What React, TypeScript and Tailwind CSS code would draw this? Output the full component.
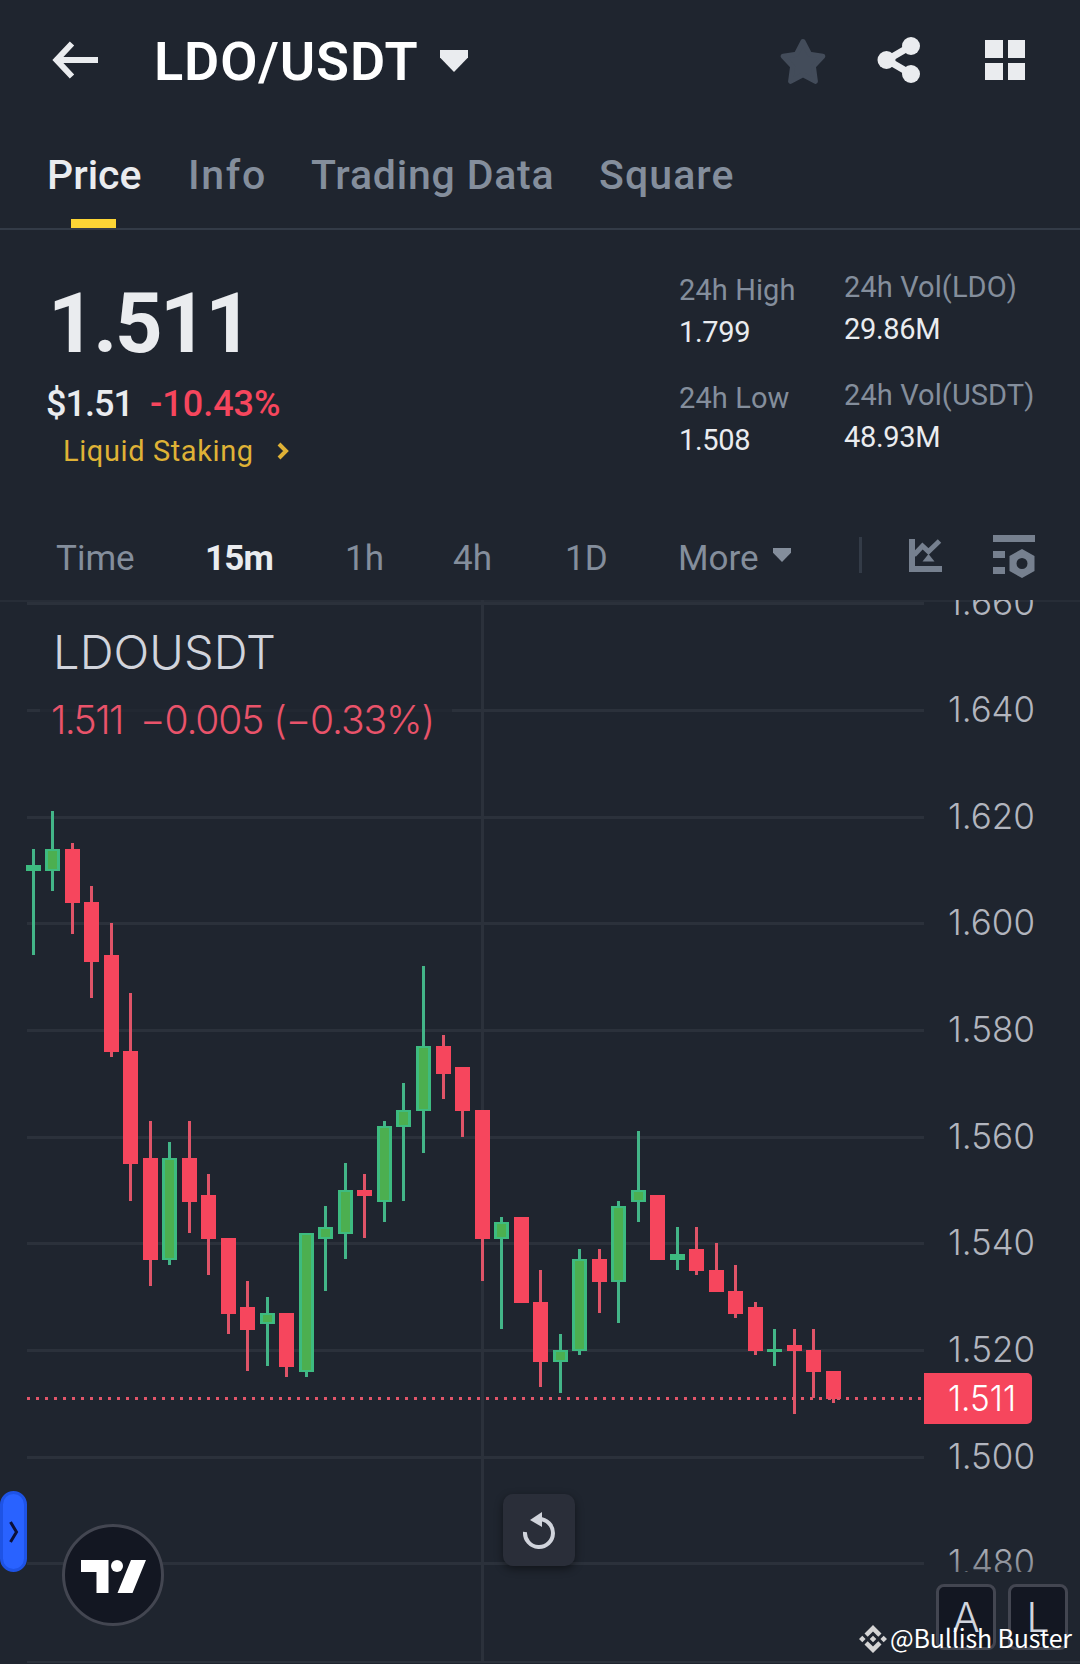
import type { ReactNode } from "react";

type Candle = [open: number, high: number, low: number, close: number];

// Prices in thousandths of a USDT
const candles: Candle[] = [
  [1610, 1614, 1594, 1611],
  [1610, 1621, 1606, 1614],
  [1614, 1615, 1598, 1604],
  [1604, 1607, 1586, 1593],
  [1594, 1600, 1575, 1576],
  [1576, 1587, 1548, 1555],
  [1556, 1563, 1532, 1537],
  [1537, 1559, 1536, 1556],
  [1556, 1563, 1542, 1548],
  [1549, 1553, 1534, 1541],
  [1541, 1541, 1523, 1527],
  [1528, 1533, 1516, 1524],
  [1525, 1530, 1517, 1527],
  [1527, 1527, 1515, 1517],
  [1516, 1542, 1515, 1542],
  [1541, 1547, 1531, 1543],
  [1542, 1555, 1537, 1550],
  [1550, 1553, 1541, 1549],
  [1548, 1563, 1544, 1562],
  [1562, 1570, 1548, 1565],
  [1565, 1592, 1557, 1577],
  [1577, 1579, 1567, 1572],
  [1573, 1573, 1560, 1565],
  [1565, 1565, 1533, 1541],
  [1541, 1545, 1524, 1544],
  [1545, 1545, 1529, 1529],
  [1529, 1535, 1513, 1518],
  [1518, 1523, 1512, 1520],
  [1520, 1539, 1519, 1537],
  [1537, 1539, 1527, 1533],
  [1533, 1548, 1525, 1547],
  [1548, 1561, 1544, 1550],
  [1549, 1549, 1537, 1537],
  [1537, 1543, 1535, 1538],
  [1539, 1543, 1534, 1535],
  [1535, 1540, 1531, 1531],
  [1531, 1536, 1526, 1527],
  [1528, 1529, 1519, 1520],
  [1520, 1524, 1517, 1520],
  [1521, 1524, 1508, 1520],
  [1520, 1524, 1511, 1516],
  [1516, 1516, 1510, 1511],
];

const gridPrices = [1660, 1640, 1620, 1600, 1580, 1560, 1540, 1520, 1500, 1480];

const priceToY = (price: number) => Math.floor(537.01 + ((1560 - price) * 16) / 3);
const indexToX = (index: number) => 33 + Math.floor(0.1 + 19.52 * index);

const tabs = [
  { label: "Price", className: "w-[141px] text-[#eaecef]", active: true },
  { label: "Info", className: "w-[123px] tracking-[1.7px] text-[#848e9c]" },
  { label: "Trading Data", className: "w-[288px] tracking-[0.8px] text-[#848e9c]" },
  { label: "Square", className: "tracking-[1.1px] text-[#848e9c]" },
];

const stats = [
  [
    { label: "24h High", value: "1.799" },
    { label: "24h Low", value: "1.508" },
  ],
  [
    { label: "24h Vol(LDO)", value: "29.86M" },
    { label: "24h Vol(USDT)", value: "48.93M" },
  ],
];

const intervals = [
  { label: "Time", className: "w-[149px] text-[#848e9c]" },
  { label: "15m", className: "w-[140px] font-bold tracking-[-0.8px] text-[#eaecef]" },
  { label: "1h", className: "w-[108px] text-[#848e9c]" },
  { label: "4h", className: "w-[112px] text-[#848e9c]" },
  { label: "1D", className: "w-[113px] text-[#848e9c]" },
];

function CaretDown({ className }: { className: string }) {
  return (
    <svg viewBox="0 0 28 22" preserveAspectRatio="none" className={className} fill="currentColor" aria-hidden="true">
      <path d="M0 0H28V7.5L14 22L0 7.5Z" />
    </svg>
  );
}

function Header() {
  return (
    <header className="flex h-[124px] items-center pl-[52px]">
      <svg width="47" height="38" viewBox="0 0 47 38" fill="none" stroke="#eaecef" strokeWidth="6" className="-mt-1 shrink-0">
        <path d="M46 19H5M20 2.5L4.5 19L20 35.5" />
      </svg>
      <h1 className="ml-[55px] w-[286px] text-[54px] leading-[54px] font-semibold tracking-[0.9px] text-white">LDO/USDT</h1>
      <CaretDown className="-mt-[2px] h-[22px] w-7 shrink-0 text-[#eaecef]" />
      <svg width="46" height="48" viewBox="0 0 46 48" fill="#434c5a" stroke="#434c5a" strokeWidth="5" strokeLinejoin="round" className="ml-[312px] shrink-0">
        <path d="M23 3.5L29.6 16.2L42.8 18.2L33.4 28.4L35.4 43.4L23 36.8L10.6 43.4L12.6 28.4L3.2 18.2L16.4 16.2Z" />
      </svg>
      <svg width="44" height="48" viewBox="0 0 44 48" fill="#eaecef" className="-mt-1 ml-[51px] shrink-0">
        <path d="M10 24L34 10M10 24L34 38" stroke="#eaecef" strokeWidth="7" />
        <circle cx="9.500" cy="24" r="9" />
        <circle cx="34" cy="10" r="9" />
        <circle cx="34" cy="38" r="9" />
      </svg>
      <div className="-mt-1 ml-[64px] grid grid-cols-2 gap-[5px]">
        {[0, 1, 2, 3].map((cell) => (
          <span key={cell} className="h-[17.5px] w-[17.5px] bg-[#eaecef]" />
        ))}
      </div>
    </header>
  );
}

function Tabs() {
  return (
    <nav className="flex h-[106px] items-center border-b-2 border-[#333b47] pl-[47px] text-[41px] font-medium">
      {tabs.map((tab) => (
        <div key={tab.label} className={`relative flex h-full items-center whitespace-nowrap ${tab.className}`}>
          {tab.label}
          {tab.active && <span className="absolute bottom-0 left-6 h-[9px] w-[45px] bg-[#fcd535]" />}
        </div>
      ))}
    </nav>
  );
}

function Ticker() {
  return (
    <section className="flex h-[288px]">
      <div className="w-[679px] pt-[52px]">
        <p className="pl-[48px] text-[83px] leading-[84px] font-bold tracking-[-2.4px] text-[#eaecef]">1.511</p>
        <div className="mt-4 flex pl-[46px] text-[36px] leading-[44px] font-medium">
          <span className="w-[104px] tracking-[-1px] text-[#eaecef]">$1.51</span>
          <span className="text-[#f6465d]">-10.43%</span>
        </div>
        <div className="mt-[5px] flex items-center pl-[63px] text-[29px] leading-[40px] text-[#dfb236]">
          <span className="w-[214px] tracking-[0.6px]">Liquid Staking</span>
          <svg width="12" height="18" viewBox="0 0 12 18" fill="none" stroke="currentColor" strokeWidth="4">
            <path d="M2 2L9 9L2 16" />
          </svg>
        </div>
      </div>
      {stats.map((column, index) => (
        <dl key={index} className={index === 0 ? "w-[165px] pt-[43px]" : "pt-10"}>
          {column.map((stat) => (
            <div key={stat.label} className="mb-8 flex flex-col gap-2 text-[29px] leading-[34px] whitespace-nowrap">
              <dt className="tracking-[0.1px] text-[#848e9c]">{stat.label}</dt>
              <dd className="tracking-[-0.3px] text-[#eaecef]">{stat.value}</dd>
            </div>
          ))}
        </dl>
      ))}
    </section>
  );
}

function IntervalBar() {
  return (
    <nav className="flex h-[82px] items-center pl-[56px] text-[35px] text-[#848e9c]">
      {intervals.map((item) => (
        <span key={item.label} className={item.className}>
          {item.label}
        </span>
      ))}
      <span className="w-[95px]">More</span>
      <CaretDown className="-mt-2 h-[14px] w-[18px]" />
      <span className="-mt-2 ml-[68px] h-[36px] w-[3px] bg-[#333b47]" />
      <svg width="33" height="33" viewBox="0 0 33 33" fill="#76808f" className="-mt-2 ml-[47px]">
        <path d="M0 0H6V27H33V33H0Z" />
        <path d="M5 16L13.500 7L19.500 12.500L30.500 2" fill="none" stroke="#76808f" strokeWidth="5" />
        <path d="M13.500 22.500L19.500 15L25.500 22.500Z" />
      </svg>
      <svg width="42" height="43" viewBox="0 0 42 43" fill="#76808f" className="-mt-[6px] ml-[51px]">
        <path d="M0 0H42V7H0ZM0 16H12V23H0ZM0 32H12V39H0Z" />
        <path fillRule="evenodd" d="M29 14L41.500 21V36L29 43L16.500 36V21ZM29 23A5.500 5.500 0 1 0 29 34A5.500 5.500 0 1 0 29 23Z" />
      </svg>
    </nav>
  );
}

function CandleShape({ candle, index }: { candle: Candle; index: number }) {
  const [open, high, low, close] = candle;
  const up = close >= open && !(close === open && high === open);
  const x = indexToX(index);
  const top = priceToY(Math.max(open, close));
  const bottom = priceToY(Math.min(open, close)) + 1;
  const bodyTop = open === close ? top - 1 : top;
  const height = Math.max(3, bottom - bodyTop);

  return (
    <g fill={up ? "#3dbb80" : "#f6465d"}>
      <rect x={x - 1} y={priceToY(high)} width={3} height={priceToY(low) - priceToY(high)} fill={up ? "#43b588" : "#df5468"} />
      <rect x={x - 7} y={bodyTop} width={15} height={height} />
      {up && height > 8 && <rect x={x - 4} y={bodyTop + 2} width={9} height={height - 4} fill="#4caf50" />}
    </g>
  );
}

function PriceChart() {
  const lastY = priceToY(1511);

  return (
    <svg width="1080" height="1064" viewBox="0 0 1080 1064" className="block font-['Inter',sans-serif] font-light">
      <defs>
        <linearGradient id="axisFade" x1="0" y1="0" x2="0" y2="1">
          <stop offset="0" stopColor="#1f252f" stopOpacity="0" />
          <stop offset="1" stopColor="#1f252f" stopOpacity="0.35" />
        </linearGradient>
      </defs>
      <rect x="0" y="0" width="1080" height="2" fill="#272d37" />
      <g fill="#2b313b" shapeRendering="crispEdges">
        {gridPrices.map((price) => (
          <rect key={price} x={27} y={priceToY(price) - 1} width={897} height={3} />
        ))}
        <rect x="481" y="0" width="3" height="1061" />
        <rect x="27" y="1061" width="1053" height="2" />
      </g>
      <rect x="40" y="90" width="412" height="50" fill="#1f252f" fillOpacity="0.7" />
      <g shapeRendering="crispEdges">
        {candles.map((candle, index) => (
          <CandleShape key={index} candle={candle} index={index} />
        ))}
      </g>
      <path d={`M27 ${lastY + 0.5}H924`} stroke="#e2566a" strokeWidth="3" strokeDasharray="3 6" />
      <g fill="#b2b5be" fontSize="36">
        {gridPrices.map((price) => (
          <text key={price} x={948} y={priceToY(price) + 12} textLength={87} lengthAdjust="spacingAndGlyphs">
            {(price / 1000).toFixed(3)}
          </text>
        ))}
      </g>
      <rect x="940" y="945" width="110" height="27" fill="url(#axisFade)" />
      <rect x="940" y="972" width="110" height="12" fill="#1f252f" />
      <path d={`M924 ${lastY - 25}H1027a5 5 0 0 1 5 5V${lastY + 21}a5 5 0 0 1 -5 5H924Z`} fill="#f6465d" />
      <text x={948} y={lastY + 13} fontSize="36" fill="#fff" textLength={68} lengthAdjust="spacingAndGlyphs">
        1.511
      </text>
    </svg>
  );
}

function ScaleButton({ children }: { children: ReactNode }) {
  return (
    <button className="flex h-[66px] w-[60px] items-center justify-center rounded-lg border-3 border-[#434651] bg-[#131722] text-[41px] leading-none">
      {children}
    </button>
  );
}

function Chart() {
  return (
    <main className="relative h-[1064px] overflow-hidden font-['Inter',sans-serif] font-light">
      <PriceChart />

      <div className="absolute top-[24px] left-[53px] whitespace-nowrap">
        <h2 className="text-[47px] leading-[56px] tracking-[0.1px] text-[#d1d4dc]">LDOUSDT</h2>
        <p className="mt-[15px] -ml-[2px] flex text-[39px] leading-[50px] text-[#e9536a]">
          <span className="w-[89px] tracking-[-1.6px]">1.511</span>
          <span className="tracking-[-1.1px]">−0.005 (−0.33%)</span>
        </p>
      </div>

      <button className="absolute top-[891px] left-0 flex h-[81px] w-[27px] items-center justify-center rounded-full border-3 border-[#1e53e5] bg-[#2962ff]">
        <svg width="10" height="22" viewBox="0 0 10 22" fill="none" stroke="#0c1038" strokeWidth="3">
          <path d="M1.500 1L7.500 11L1.500 21" />
        </svg>
      </button>

      <div className="absolute top-[924px] left-[62px] flex h-[102px] w-[102px] items-center justify-center rounded-full border-3 border-[#434651] bg-[#131722]">
        <svg width="65" height="33" viewBox="0 0 65 33" fill="#fff" className="mt-[3px]">
          <path d="M0 0H27.500V33H15.500V12H0ZM50 0H65L51.500 33H36.500Z" />
          <circle cx="36" cy="6" r="6" />
        </svg>
      </div>

      <button className="absolute top-[894px] left-[503px] flex h-[72px] w-[72px] items-center justify-center rounded-[10px] bg-[#2a2e39] shadow-[0_3px_8px_rgba(0,0,0,0.45)]">
        <svg width="36" height="40" viewBox="0 0 36 40" fill="none" stroke="#d1d4dc" strokeWidth="4">
          <path d="M4 22A14 14 0 1 0 18 9" />
          <path d="M9 10L21 2V17Z" fill="#d1d4dc" stroke="none" />
        </svg>
      </button>

      <div className="absolute top-[984px] left-[936px] flex gap-3 text-[#d1d4dc]">
        <ScaleButton>A</ScaleButton>
        <ScaleButton>L</ScaleButton>
      </div>

      <div className="absolute top-[1022px] left-[859px] flex items-center font-['Noto_Sans_CJK_SC',sans-serif] font-normal text-white">
        <svg width="28" height="28" viewBox="0 0 28 28" fill="#d4d4d4">
          <path d="M14 0L22.500 8.500L19.300 11.700L14 6.400L8.700 11.700L5.500 8.500ZM14 28L22.500 19.500L19.300 16.300L14 21.600L8.700 16.300L5.500 19.500Z" />
          <path d="M14 10.700L17.300 14L14 17.300L10.700 14ZM3.300 10.700L6.600 14L3.300 17.300L0 14ZM24.700 10.700L28 14L24.700 17.300L21.400 14Z" />
        </svg>
        <span className="-mt-[3px] ml-[3px] text-[25px] leading-[36px] tracking-[-0.15px] whitespace-nowrap">@Bullish Buster</span>
      </div>
    </main>
  );
}

export default function App() {
  return (
    <div className="h-[1664px] w-[1080px] overflow-hidden bg-[#1f252f] font-['Roboto',sans-serif]">
      <Header />
      <Tabs />
      <Ticker />
      <IntervalBar />
      <Chart />
    </div>
  );
}
